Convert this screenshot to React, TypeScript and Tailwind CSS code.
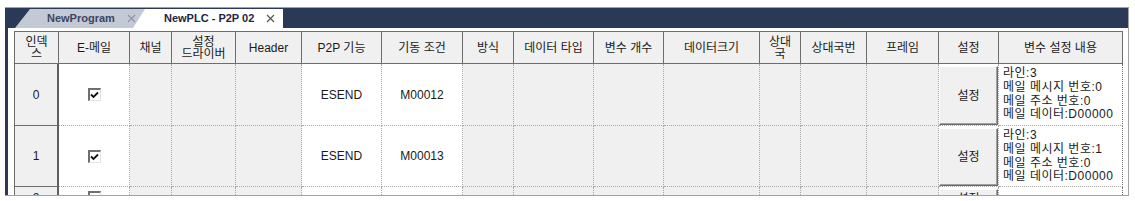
import React from 'react';

const font = '[font-family:"Liberation_Sans","Noto_Sans_CJK_KR",sans-serif]';

const headers = [
  ['인덱', '스'],
  ['E-메일'],
  ['채널'],
  ['설정', '드라이버'],
  ['Header'],
  ['P2P 기능'],
  ['기동 조건'],
  ['방식'],
  ['데이터 타입'],
  ['변수 개수'],
  ['데이터크기'],
  ['상대', '국'],
  ['상대국번'],
  ['프레임'],
  ['설정'],
  ['변수 설정 내용'],
];

type Row = {
  index: string;
  height: string;
  func: string;
  cond: string;
  lines: string[];
};

const rows: Row[] = [
  {
    index: '0',
    height: 'h-[62px]',
    func: 'ESEND',
    cond: 'M00012',
    lines: ['라인:3', '메일 메시지 번호:0', '메일 주소 번호:0', '메일 데이터:D00000'],
  },
  {
    index: '1',
    height: 'h-[61px]',
    func: 'ESEND',
    cond: 'M00013',
    lines: ['라인:3', '메일 메시지 번호:1', '메일 주소 번호:0', '메일 데이터:D00000'],
  },
  { index: '2', height: 'h-[22px]', func: '', cond: '', lines: [] },
];

function CloseIcon({ color }: { color: string }) {
  return (
    <svg width="9" height="9" viewBox="0 0 9 9" className="shrink-0">
      <path d="M1 1 L8 8 M8 1 L1 8" stroke={color} strokeWidth="1.2" />
    </svg>
  );
}

function CheckBox() {
  return (
    <span className="w-[13px] h-[13px] bg-white border-t-2 border-l-2 border-t-[#6f6f6f] border-l-[#6f6f6f] border-b border-r border-b-[#e3e3e3] border-r-[#e3e3e3] flex items-center justify-center">
      <svg width="9" height="8" viewBox="0 0 9 8">
        <path d="M1 3.5 L3.5 6 L8 1.5" stroke="#111" strokeWidth="1.8" fill="none" />
      </svg>
    </span>
  );
}

function GrayCell({ h }: { h: string }) {
  return (
    <div className={`${h} bg-[#f0f0f0] border-r border-b border-dotted border-[#a9a9a9]`} />
  );
}

function TextCell({ h, text }: { h: string; text: string }) {
  return (
    <div className={`${h} bg-white border-r border-b border-dotted border-[#a9a9a9] flex items-center justify-center`}>
      {text}
    </div>
  );
}

export default function App() {
  return (
    <div className={`w-[1135px] h-[201px] bg-white overflow-hidden pt-[7px] text-[12px] text-[#1a1a1a] ${font}`}>
      <div className="ml-[5px] w-[1124px] h-[189px] bg-[#293956] border-t border-r border-b border-[#a2a2a2] flex flex-col overflow-hidden">
        {/* Tabs */}
        <div className="h-[20px] shrink-0 flex items-end pl-[10px]">
          <div className="h-[19px] w-[132px] bg-[#c3c9d5] [clip-path:polygon(0_100%,15px_0,100%_0,100%_100%)] flex items-center pl-[32px] gap-[12px]">
            <span className="text-[11px] font-bold text-[#3b4660] leading-none">NewProgram</span>
            <CloseIcon color="#8d96a8" />
          </div>
          <div className="h-[19px] w-[150px] -ml-[14px] bg-white [clip-path:polygon(0_100%,12px_0,100%_0,100%_100%)] flex items-center pl-[31px] gap-[12px]">
            <span className="text-[11px] font-bold text-[#1c2741] leading-none">NewPLC - P2P 02</span>
            <CloseIcon color="#555" />
          </div>
        </div>

        {/* Grid */}
        <div className="flex-1 ml-[3px] bg-white pt-[3px] pl-[6px] overflow-hidden">
          <div className="w-[1109px] grid grid-cols-[44px_71px_42px_64px_66px_80px_81px_51px_80px_70px_96px_41px_66px_72px_60px_124px] border-t border-l border-[#6d6d6d]">
            {headers.map((h, i) => (
              <div
                key={i}
                className="h-[32px] bg-[#f0f0f0] border-r border-b border-[#6d6d6d] flex flex-col items-center justify-center leading-[12px]"
              >
                {h.map((line) => (
                  <span key={line}>{line}</span>
                ))}
              </div>
            ))}

            {rows.map((r) => (
              <React.Fragment key={r.index}>
                <div className={`${r.height} bg-[#f0f0f0] border-r-2 border-r-[#5f5f5f] border-b border-b-[#6d6d6d] flex items-center justify-center`}>
                  {r.index}
                </div>
                <div className={`${r.height} bg-white border-r border-b border-dotted border-[#a9a9a9] flex items-center justify-center`}>
                  <CheckBox />
                </div>
                <GrayCell h={r.height} />
                <GrayCell h={r.height} />
                <GrayCell h={r.height} />
                <TextCell h={r.height} text={r.func} />
                <TextCell h={r.height} text={r.cond} />
                <GrayCell h={r.height} />
                <GrayCell h={r.height} />
                <GrayCell h={r.height} />
                <GrayCell h={r.height} />
                <GrayCell h={r.height} />
                <GrayCell h={r.height} />
                <GrayCell h={r.height} />
                <div className={`${r.height} bg-white border-r border-b border-dotted border-[#a9a9a9] pt-[2px] flex`}>
                  <button className="flex-1 bg-[#f0f0f0] border border-t-white border-l-white border-b-[#696969] border-r-[#696969] shadow-[inset_-1px_-1px_0_#a0a0a0] flex items-center justify-center">
                    설정
                  </button>
                </div>
                <div className={`${r.height} bg-white border-r border-r-[#6d6d6d] border-b border-dotted border-b-[#a9a9a9] pl-[4px] pt-[3px] leading-[13.75px] tracking-[0.5px] flex flex-col`}>
                  {r.lines.map((line) => (
                    <span key={line} className="whitespace-nowrap">{line}</span>
                  ))}
                </div>
              </React.Fragment>
            ))}
          </div>
        </div>
      </div>
    </div>
  );
}
